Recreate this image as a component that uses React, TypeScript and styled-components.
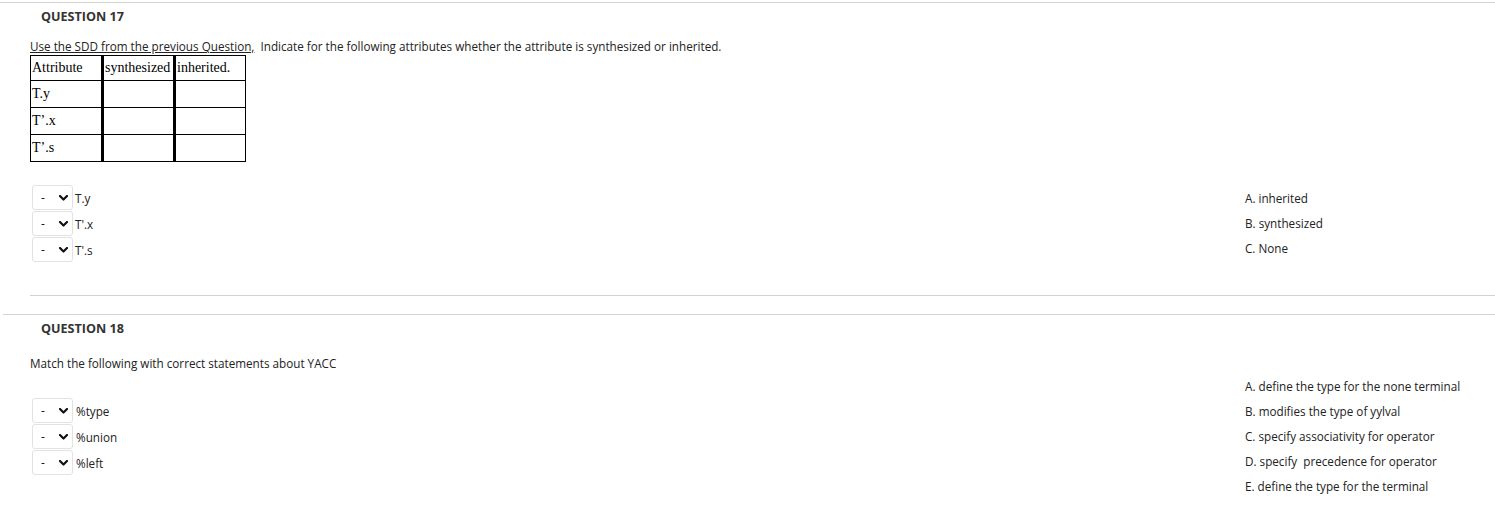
import React from "react";
import styled, { createGlobalStyle } from "styled-components";

const GlobalStyle = createGlobalStyle`
  html, body {
    margin: 0;
    padding: 0;
    background: #ffffff;
  }
  body {
    font-family: "Open Sans", "Noto Sans", "Liberation Sans", sans-serif;
    color: #333333;
  }
`;

const Page = styled.div`
  width: 1495px;
  height: 530px;
  overflow: hidden;
  padding-top: 2px;
  box-sizing: border-box;
`;

const QuestionBlock = styled.section<{ $indent: number }>`
  margin-left: ${(p) => p.$indent}px;
  border-top: 1px solid #d2d2d2;
`;

const QuestionTitle = styled.h3<{ $indent: number }>`
  margin: 0;
  padding: 5px 0 0 ${(p) => p.$indent}px;
  font-size: 12.6px;
  line-height: 18px;
  font-weight: 700;
  color: #333333;
`;

const QuestionBody = styled.div<{ $indent: number }>`
  padding-left: ${(p) => p.$indent}px;
`;

const Prompt = styled.p<{ $top: number }>`
  margin: ${(p) => p.$top}px 0 0 0;
  font-size: 11.7px;
  line-height: 16px;
  color: #222222;
  white-space: pre;
`;

const Underlined = styled.span`
  text-decoration: underline;
  text-underline-offset: 1px;
`;

const AttrTable = styled.table`
  margin-top: 1px;
  width: 215px;
  table-layout: fixed;
  border-collapse: collapse;
  border: 1px solid #000;
  font-family: "Liberation Serif", "Times New Roman", serif;
  font-size: 14px;
  color: #000;
`;

const Col = styled.col<{ $w: number }>`
  width: ${(p) => p.$w}px;
`;

const Row = styled.tr<{ $h: number }>`
  height: ${(p) => p.$h}px;
`;

const Cell = styled.td<{ $thick?: boolean }>`
  padding: 0 0 0 1px;
  border-top: 1px solid #000;
  border-bottom: 1px solid #000;
  border-left: 1px solid #000;
  border-right: ${(p) => (p.$thick ? "3px" : "1px")} solid #000;
  vertical-align: middle;
  white-space: nowrap;
  overflow: hidden;
  line-height: 16px;
`;

const MatchArea = styled.div<{ $top: number }>`
  margin-top: ${(p) => p.$top}px;
  display: grid;
  grid-template-columns: 1213px 1fr;
  align-items: center;
  padding-left: 2px;
`;

const SelectList = styled.div`
  display: flex;
  flex-direction: column;
  gap: 1px;
`;

const SelectRow = styled.div<{ $gap: number }>`
  display: flex;
  align-items: center;
  gap: ${(p) => p.$gap}px;
`;

const SelectBox = styled.div`
  width: 41px;
  height: 25px;
  box-sizing: border-box;
  border: 1px solid #e2e2e2;
  border-radius: 3px;
  display: flex;
  align-items: center;
  padding-left: 8px;
  gap: 13px;
  font-size: 12px;
  color: #111;
  background: #fff;
`;

const Dash = styled.span`
  width: 5px;
  line-height: 14px;
`;

const Chevron = styled.svg`
  width: 9px;
  height: 6px;
  display: block;
`;

const ItemLabel = styled.span`
  font-size: 11.7px;
  line-height: 16px;
  color: #222222;
`;

const AnswerList = styled.ol`
  list-style: none;
  margin: 0;
  padding: 0;
`;

const Answer = styled.li`
  font-size: 11.7px;
  line-height: 25px;
  color: #222222;
  white-space: pre;
`;

const Divider = styled.hr`
  margin: 33px 0 0 30px;
  border: 0;
  border-top: 1px solid #d2d2d2;
  height: 0;
`;

const SecondQuestion = styled.div`
  margin-top: 18px;
`;

function Select({ label, gap }: { label: string; gap: number }) {
  return (
    <SelectRow $gap={gap}>
      <SelectBox>
        <Dash>-</Dash>
        <Chevron viewBox="0 0 9 6">
          <polyline
            points="1,1 4.5,4.5 8,1"
            fill="none"
            stroke="#111"
            strokeWidth="2.2"
            strokeLinecap="round"
            strokeLinejoin="round"
          />
        </Chevron>
      </SelectBox>
      <ItemLabel>{label}</ItemLabel>
    </SelectRow>
  );
}

export default function App() {
  return (
    <>
      <GlobalStyle />
      <Page>
        <QuestionBlock $indent={0}>
          <QuestionTitle $indent={41}>QUESTION 17</QuestionTitle>
          <QuestionBody $indent={30}>
            <Prompt $top={12}>
              <Underlined>Use the SDD from the previous Question,</Underlined>
              {"  Indicate for the following attributes whether the attribute is synthesized or inherited."}
            </Prompt>
            <AttrTable>
              <colgroup>
                <Col $w={72} />
                <Col $w={72} />
                <Col $w={71} />
              </colgroup>
              <tbody>
                <Row $h={25}>
                  <Cell $thick>Attribute</Cell>
                  <Cell $thick>synthesized</Cell>
                  <Cell>inherited.</Cell>
                </Row>
                <Row $h={27}>
                  <Cell $thick>T.y</Cell>
                  <Cell $thick />
                  <Cell />
                </Row>
                <Row $h={27}>
                  <Cell $thick>T’.x</Cell>
                  <Cell $thick />
                  <Cell />
                </Row>
                <Row $h={27}>
                  <Cell $thick>T’.s</Cell>
                  <Cell $thick />
                  <Cell />
                </Row>
              </tbody>
            </AttrTable>
            <MatchArea $top={23}>
              <SelectList>
                <Select label="T.y" gap={2} />
                <Select label="T'.x" gap={2} />
                <Select label="T'.s" gap={2} />
              </SelectList>
              <AnswerList>
                <Answer>A. inherited</Answer>
                <Answer>B. synthesized</Answer>
                <Answer>C. None</Answer>
              </AnswerList>
            </MatchArea>
          </QuestionBody>
        </QuestionBlock>
        <Divider />
        <SecondQuestion>
          <QuestionBlock $indent={3}>
            <QuestionTitle $indent={38}>QUESTION 18</QuestionTitle>
            <QuestionBody $indent={27}>
              <Prompt $top={17}>Match the following with correct statements about YACC</Prompt>
              <MatchArea $top={3}>
                <SelectList>
                  <Select label="%type" gap={3} />
                  <Select label="%union" gap={3} />
                  <Select label="%left" gap={3} />
                </SelectList>
                <AnswerList>
                  <Answer>A. define the type for the none terminal</Answer>
                  <Answer>B. modifies the type of yylval</Answer>
                  <Answer>C. specify associativity for operator</Answer>
                  <Answer>D. specify  precedence for operator</Answer>
                  <Answer>E. define the type for the terminal</Answer>
                </AnswerList>
              </MatchArea>
            </QuestionBody>
          </QuestionBlock>
        </SecondQuestion>
      </Page>
    </>
  );
}
